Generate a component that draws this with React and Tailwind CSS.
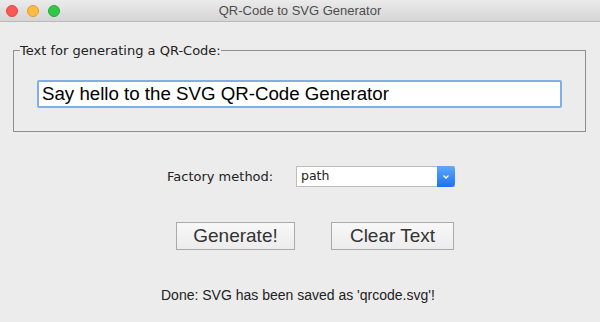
import React from 'react';

const App = () => {
  return (
    <div
      className="w-[600px] h-[322px] bg-[#ececec] flex flex-col overflow-hidden"
      style={{ fontFamily: '"Liberation Sans", Arial, sans-serif' }}
    >
      {/* title bar */}
      <div className="relative h-[22px] shrink-0 bg-gradient-to-b from-[#ebebeb] to-[#d5d5d5] border-b border-[#b9b9b9] flex items-center justify-center">
        <div className="absolute left-[6px] top-[5px] flex gap-[9px]">
          <span className="w-[12px] h-[12px] rounded-full bg-[#fc5753] border border-[#df4744]" />
          <span className="w-[12px] h-[12px] rounded-full bg-[#fdbc40] border border-[#de9f34]" />
          <span className="w-[12px] h-[12px] rounded-full bg-[#33c748] border border-[#27aa35]" />
        </div>
        <span className="text-[13px] text-[#4d4d4d]">QR-Code to SVG Generator</span>
      </div>

      {/* group box */}
      <fieldset className="ml-[13px] mr-[15px] mt-[21px] h-[89px] border border-[#8e8e8e] px-[23px] pt-[22px] m-0">
        <legend
          className="-ml-[17px] px-0 text-[#222] leading-[15px]"
          style={{ fontFamily: '"DejaVu Sans", sans-serif', fontSize: '13px' }}
        >
          Text for generating a QR-Code:
        </legend>
        <div className="h-[28px] w-[525px] bg-white border-[2px] border-[#82aee6] rounded-[2px] flex items-center px-[3px]">
          <span className="text-[18.7px] text-black leading-none">Say hello to the SVG QR-Code Generator</span>
        </div>
      </fieldset>

      {/* factory method */}
      <div className="mt-[34px] flex items-center">
        <span
          className="ml-[167px] w-[129px] text-[#222]"
          style={{ fontFamily: '"DejaVu Sans", sans-serif', fontSize: '13px' }}
        >
          Factory method:
        </span>
        <div className="w-[159px] h-[21px] bg-white border border-[#bdbdbd] flex items-stretch">
          <span
            className="flex-1 pl-[4px] text-[12.5px] text-[#222] flex items-center"
            style={{ fontFamily: '"DejaVu Sans", sans-serif' }}
          >
            path
          </span>
          <span className="w-[18px] -my-px -mr-px bg-gradient-to-b from-[#5ea8fb] to-[#1c6ff0] rounded-r-[4px] flex items-center justify-center">
            <svg width="8" height="6" viewBox="0 0 8 6">
              <path d="M1.5 1.5 L4 4 L6.5 1.5" fill="none" stroke="white" strokeWidth="1.3" />
            </svg>
          </span>
        </div>
      </div>

      {/* buttons */}
      <div className="mt-[35px] flex">
        <button className="ml-[176px] w-[119px] h-[28px] bg-gradient-to-b from-[#f8f8f8] to-[#ececec] border border-[#aaa] text-[19px] text-[#333] flex items-center justify-center">
          Generate!
        </button>
        <button className="ml-[36px] w-[123px] h-[28px] bg-gradient-to-b from-[#f8f8f8] to-[#ececec] border border-[#aaa] text-[19px] text-[#333] flex items-center justify-center">
          Clear Text
        </button>
      </div>

      {/* status */}
      <div className="mt-[38px] ml-[161px] text-[14px] text-[#222] leading-none">
        Done: SVG has been saved as 'qrcode.svg'!
      </div>
    </div>
  );
};

export default App;
